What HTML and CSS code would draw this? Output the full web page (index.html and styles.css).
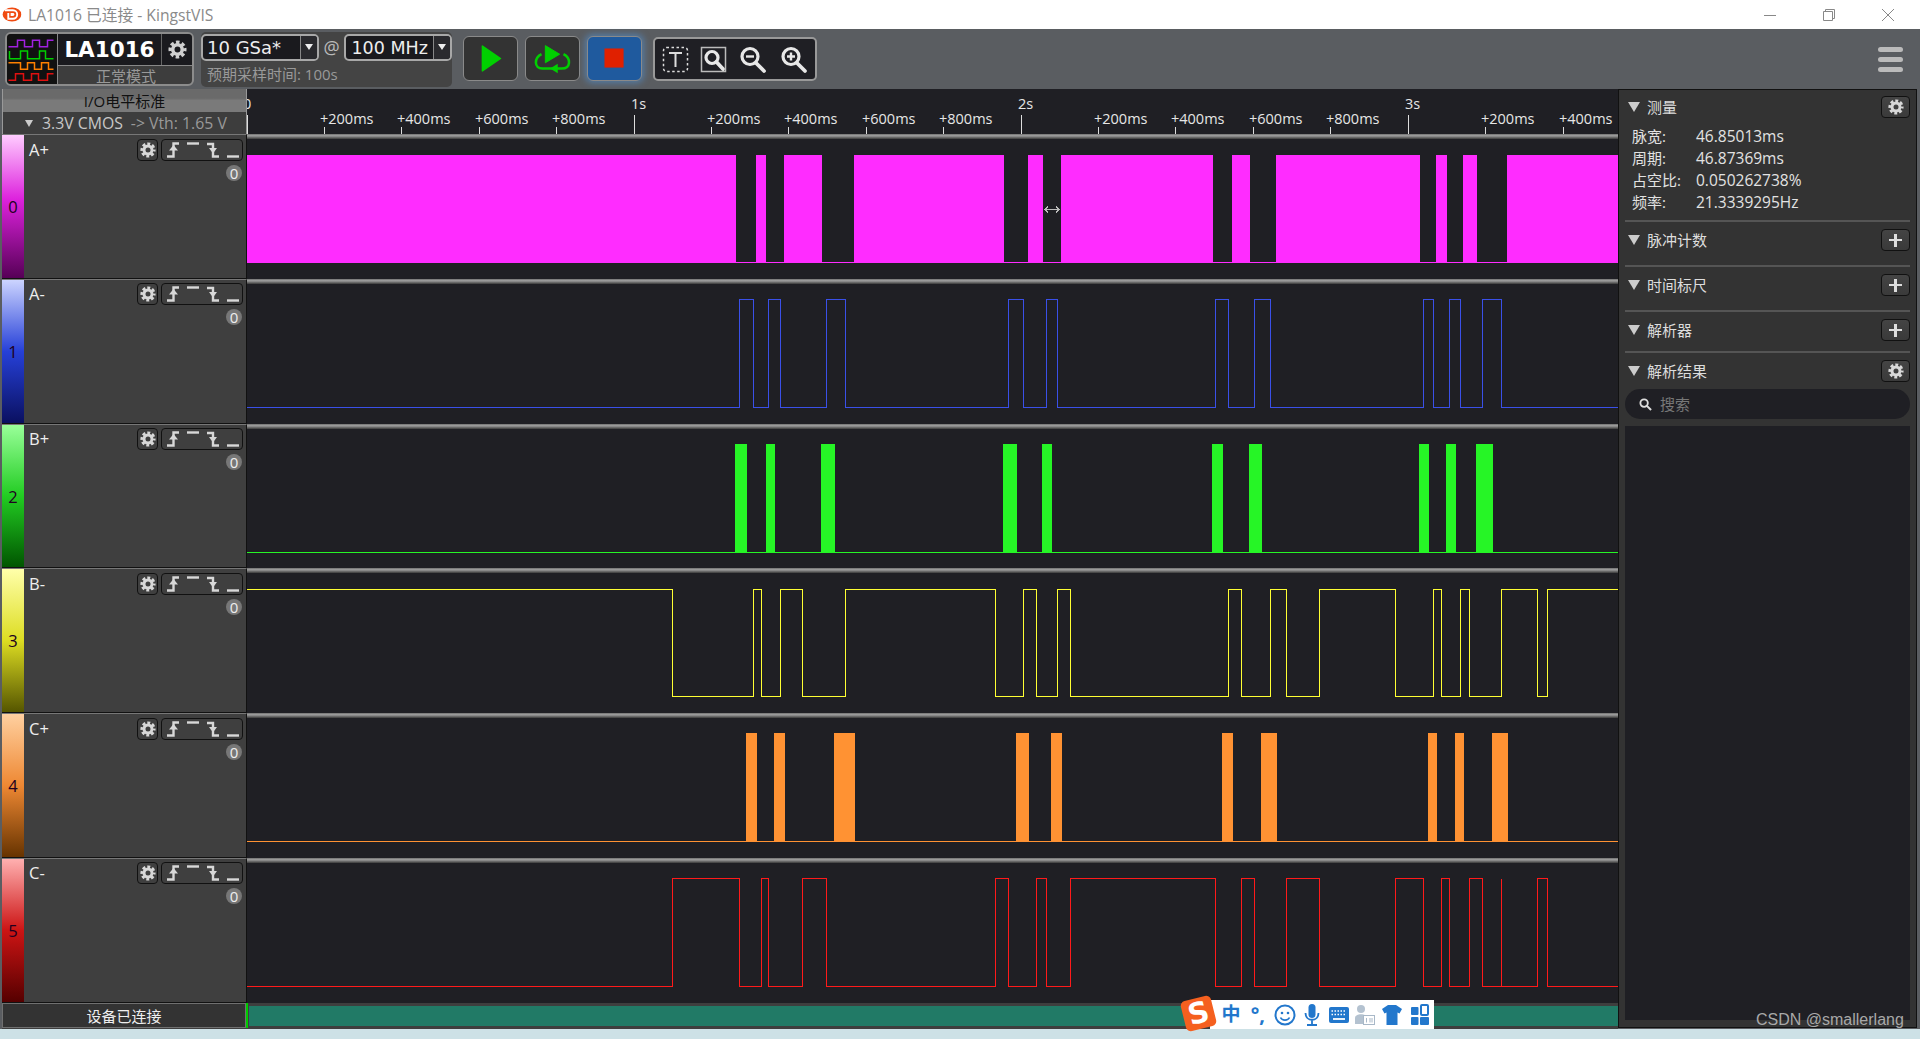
FILE: index.html
```html
<!DOCTYPE html>
<html lang="zh-CN">
<head>
<meta charset="utf-8">
<title>LA1016 已连接 - KingstVIS</title>
<link rel="stylesheet" href="styles.css">
</head>
<body>
<svg class="defs" width="0" height="0">
  <symbol id="gear" viewBox="0 0 16 16">
    <circle cx="8" cy="8" r="4" fill="none" stroke="currentColor" stroke-width="3"/>
    <circle cx="8" cy="8" r="6.200" fill="none" stroke="currentColor" stroke-width="2.800" stroke-dasharray="2.900 1.970" stroke-dashoffset="1.450"/>
  </symbol>
  <symbol id="trig" viewBox="0 0 80 20">
    <path d="M5 16.500H11.500V3.500H17" fill="none" stroke="currentColor" stroke-width="2.400"/>
    <path d="M7 10.500L11.500 5L16 10.500Z" fill="currentColor"/>
    <path d="M25 3.500H37" fill="none" stroke="currentColor" stroke-width="2.400"/>
    <path d="M45 4H51V16.500H57" fill="none" stroke="currentColor" stroke-width="2.400"/>
    <path d="M47 8L51 13.500L55 8Z" fill="currentColor"/>
    <path d="M65 16.500H77" fill="none" stroke="currentColor" stroke-width="2.400"/>
  </symbol>
</svg>

<header class="titlebar">
  <svg class="app-icon" viewBox="0 0 22 16"><ellipse cx="10.500" cy="8" rx="10" ry="7.500" fill="#f04a10"/><path d="M3 3.500H11.500A4.500 4.500 0 0 1 11.500 12.500H6.500V6.500" fill="none" stroke="#fff" stroke-width="2"/><path d="M9 6.500H11.500A1.500 1.500 0 0 1 11.500 9.500H9Z" fill="#fff"/><path d="M20.500 5L22 8L20.500 11Z" fill="#fff"/></svg>
  <span class="title-text">LA1016 已连接 - KingstVIS</span>
  <div class="win-controls">
    <svg class="win-btn" viewBox="0 0 14 14"><path d="M1 7.500H13"/></svg>
    <svg class="win-btn" viewBox="0 0 14 14"><path d="M1.500 3.500H10.500V12.500H1.500ZM3.500 3.500V1.500H12.500V10.500H10.500"/></svg>
    <svg class="win-btn" viewBox="0 0 14 14"><path d="M1 1L13 13M13 1L1 13"/></svg>
  </div>
</header>

<section class="toolbar">
  <div class="device">
    <svg class="device-logo" viewBox="0 0 49 50">
      <path class="lg-purple" d="M1 12.700H10V6.300H17V12.700H25V6.300H32V12.700H40V6.300H46"/>
      <path class="lg-green" d="M2 17V24.700H13V17H20V24.700H32V17H38V24.700H46"/>
      <path class="lg-orange" d="M1 28.700H13V35.300H20V28.700H27V35.300H34V28.700H41V35.300H46"/>
      <path class="lg-red" d="M1 46.300H8V39.700H16V46.300H24V39.700H31V46.300H40V39.700H46"/>
    </svg>
    <div class="device-main">
      <div class="device-top">
        <span class="device-name">LA1016</span>
        <span class="device-gear"><svg class="gear-lg"><use href="#gear"/></svg></span>
      </div>
      <div class="device-mode">正常模式</div>
    </div>
  </div>

  <div class="sampler">
    <div class="sampler-top">
      <div class="combo combo-rate"><span class="combo-value">10 GSa*</span><span class="combo-arrow"><i class="tri-white"></i></span></div>
      <span class="at">@</span>
      <div class="combo combo-thresh"><span class="combo-value">100 MHz</span><span class="combo-arrow"><i class="tri-white"></i></span></div>
    </div>
    <div class="sampler-hint">预期采样时间: 100s</div>
  </div>

  <button class="tool-btn">
    <svg class="tool-ico" viewBox="0 0 55 45"><path d="M19 9.500L38 22.500L19 35.500Z" fill="#00d000" stroke="#00d000" stroke-linejoin="round" stroke-width="1.500"/></svg>
  </button>
  <button class="tool-btn">
    <svg class="tool-ico" viewBox="0 0 55 45"><path d="M20 9L35 18L20 27Z" fill="#00d000" stroke="#00d000" stroke-linejoin="round"/><path d="M16 18C8 22 8 33 17 33H37C47 33 47 22 39 18" fill="none" stroke="#00d000" stroke-width="2.600"/><path d="M33 28V38L25 33Z" fill="#00d000"/></svg>
  </button>
  <button class="tool-btn tool-stop">
    <svg class="tool-ico" viewBox="0 0 55 45"><rect x="17" y="12" width="20" height="20" fill="#e02000"/></svg>
  </button>

  <div class="view-tools">
    <svg class="view-ico" viewBox="0 0 32 40"><rect x="4.500" y="8.500" width="24" height="24" rx="3" fill="none" stroke="#ddd" stroke-width="1.500" stroke-dasharray="2.500 2.500"/><path d="M10 14H23M16.500 14V28" fill="none" stroke="#ddd" stroke-width="2"/></svg>
    <svg class="view-ico" viewBox="0 0 40 40"><rect x="9.500" y="8.500" width="24" height="24" fill="none" stroke="#bbb" stroke-width="1.500"/><circle cx="20" cy="18.500" r="6" fill="none" stroke="#e8e8e8" stroke-width="3.200"/><path d="M24.500 23L31 30" stroke="#e8e8e8" stroke-width="3.800" stroke-linecap="round"/></svg>
    <svg class="view-ico" viewBox="0 0 40 40"><circle cx="17" cy="17.500" r="8" fill="none" stroke="#e8e8e8" stroke-width="3.200"/><path d="M23 24L31 32" stroke="#e8e8e8" stroke-width="3.800" stroke-linecap="round"/><path d="M13 17.500H21" stroke="#e8e8e8" stroke-width="2.400"/></svg>
    <svg class="view-ico" viewBox="0 0 40 40"><circle cx="17" cy="17.500" r="8" fill="none" stroke="#e8e8e8" stroke-width="3.200"/><path d="M23 24L31 32" stroke="#e8e8e8" stroke-width="3.800" stroke-linecap="round"/><path d="M13 17.500H21M17 13.500V21.500" stroke="#e8e8e8" stroke-width="2.400"/></svg>
  </div>

  <div class="hamburger"><i></i><i></i><i></i></div>
</section>

<main class="main">
  <div class="workspace">
    <div class="top-row">
      <div class="io">
        <div class="io-title">I/O电平标准</div>
        <div class="io-value"><i class="tri-gray"></i><span class="io-std">3.3V CMOS</span><span class="io-vth">-&gt; Vth: 1.65 V</span></div>
      </div>
      <svg class="ruler" viewBox="247 89 1371 45">
        <path class="tick" d="M247.500 115V134M324.500 127V134M401.500 127V134M479.500 127V134M556.500 127V134M634.500 115V134M711.500 127V134M788.500 127V134M866.500 127V134M943.500 127V134M1021.500 115V134M1098.500 127V134M1175.500 127V134M1253.500 127V134M1330.500 127V134M1408.500 115V134M1485.500 127V134M1563.500 127V134"/>
        <text class="tk" x="243" y="109">0</text>
        <text class="tk" x="320" y="124">+200ms</text>
        <text class="tk" x="397" y="124">+400ms</text>
        <text class="tk" x="475" y="124">+600ms</text>
        <text class="tk" x="552" y="124">+800ms</text>
        <text class="tk" x="631" y="109">1s</text>
        <text class="tk" x="707" y="124">+200ms</text>
        <text class="tk" x="784" y="124">+400ms</text>
        <text class="tk" x="862" y="124">+600ms</text>
        <text class="tk" x="939" y="124">+800ms</text>
        <text class="tk" x="1018" y="109">2s</text>
        <text class="tk" x="1094" y="124">+200ms</text>
        <text class="tk" x="1171" y="124">+400ms</text>
        <text class="tk" x="1249" y="124">+600ms</text>
        <text class="tk" x="1326" y="124">+800ms</text>
        <text class="tk" x="1405" y="109">3s</text>
        <text class="tk" x="1481" y="124">+200ms</text>
        <text class="tk" x="1559" y="124">+400ms</text>
      </svg>
    </div>

    <div class="row">
      <div class="head">
        <div class="strip strip-0"><span class="strip-num">0</span></div>
        <div class="head-body">
          <div class="head-top"><span class="ch-name">A+</span><span class="mini-btn"><svg class="gear-sm"><use href="#gear"/></svg></span><span class="trig-btn"><svg class="trig-ico"><use href="#trig"/></svg></span></div>
          <div class="badge">0</div>
        </div>
      </div>
      <div class="wave">
        <div class="sep"></div>
        <svg class="wave-svg" viewBox="247 139 1371 140">
          <rect class="f-mag" x="247" y="155" width="1371" height="108"/>
          <path class="gap" d="M736 155H756V262H736ZM766 155H784V262H766ZM822 155H854V262H822ZM1004 155H1028V262H1004ZM1043 155H1061V262H1043ZM1213 155H1232V262H1213ZM1250 155H1276V262H1250ZM1420 155H1436V262H1420ZM1447 155H1463V262H1447ZM1477 155H1507V262H1477Z"/>
          <path class="cursor" d="M1045 209.500H1059M1048 206.500L1045 209.500L1048 212.500M1056 206.500L1059 209.500L1056 212.500"/>
        </svg>
      </div>
    </div>

    <div class="row row-up">
      <div class="head">
        <div class="strip strip-1"><span class="strip-num">1</span></div>
        <div class="head-body">
          <div class="head-top"><span class="ch-name">A-</span><span class="mini-btn"><svg class="gear-sm"><use href="#gear"/></svg></span><span class="trig-btn"><svg class="trig-ico"><use href="#trig"/></svg></span></div>
          <div class="badge">0</div>
        </div>
      </div>
      <div class="wave">
        <div class="sep"></div>
        <svg class="wave-svg" viewBox="247 284 1371 140">
          <path class="l-blue" d="M247 407.500H739.500V299.500H753.500V407.500H768.500V299.500H780.500V407.500H826.500V299.500H845.500V407.500H1008.500V299.500H1023.500V407.500H1046.500V299.500H1057.500V407.500H1215.500V299.500H1228.500V407.500H1254.500V299.500H1270.500V407.500H1423.500V299.500H1433.500V407.500H1449.500V299.500H1460.500V407.500H1482.500V299.500H1501.500V407.500H1618"/>
        </svg>
      </div>
    </div>

    <div class="row row-short row-up">
      <div class="head">
        <div class="strip strip-2"><span class="strip-num">2</span></div>
        <div class="head-body">
          <div class="head-top"><span class="ch-name">B+</span><span class="mini-btn"><svg class="gear-sm"><use href="#gear"/></svg></span><span class="trig-btn"><svg class="trig-ico"><use href="#trig"/></svg></span></div>
          <div class="badge">0</div>
        </div>
      </div>
      <div class="wave">
        <div class="sep"></div>
        <svg class="wave-svg" viewBox="247 429 1371 139">
          <path class="f-green" d="M247 552H1618V553H247ZM735 444H747V553H735ZM766 444H775V553H766ZM821 444H835V553H821ZM1003 444H1017V553H1003ZM1042 444H1052V553H1042ZM1212 444H1223V553H1212ZM1249 444H1262V553H1249ZM1419 444H1429V553H1419ZM1446 444H1456V553H1446ZM1476 444H1493V553H1476Z"/>
        </svg>
      </div>
    </div>

    <div class="row">
      <div class="head">
        <div class="strip strip-3"><span class="strip-num">3</span></div>
        <div class="head-body">
          <div class="head-top"><span class="ch-name">B-</span><span class="mini-btn"><svg class="gear-sm"><use href="#gear"/></svg></span><span class="trig-btn"><svg class="trig-ico"><use href="#trig"/></svg></span></div>
          <div class="badge">0</div>
        </div>
      </div>
      <div class="wave">
        <div class="sep"></div>
        <svg class="wave-svg" viewBox="247 573 1371 140">
          <path class="l-yellow" d="M247 589.500H672.500V696.500H753.500V589.500H761.500V696.500H780.500V589.500H802.500V696.500H845.500V589.500H995.500V696.500H1023.500V589.500H1036.500V696.500H1057.500V589.500H1070.500V696.500H1228.500V589.500H1241.500V696.500H1270.500V589.500H1286.500V696.500H1319.500V589.500H1395.500V696.500H1433.500V589.500H1441.500V696.500H1460.500V589.500H1469.500V696.500H1501.500V589.500H1537.500V696.500H1547.500V589.500H1618"/>
        </svg>
      </div>
    </div>

    <div class="row">
      <div class="head">
        <div class="strip strip-4"><span class="strip-num">4</span></div>
        <div class="head-body">
          <div class="head-top"><span class="ch-name">C+</span><span class="mini-btn"><svg class="gear-sm"><use href="#gear"/></svg></span><span class="trig-btn"><svg class="trig-ico"><use href="#trig"/></svg></span></div>
          <div class="badge">0</div>
        </div>
      </div>
      <div class="wave">
        <div class="sep"></div>
        <svg class="wave-svg" viewBox="247 718 1371 140">
          <path class="f-orange" d="M247 841H1618V842H247ZM746 733H757V842H746ZM774 733H785V842H774ZM834 733H855V842H834ZM1016 733H1029V842H1016ZM1051 733H1062V842H1051ZM1222 733H1233V842H1222ZM1261 733H1277V842H1261ZM1428 733H1437V842H1428ZM1455 733H1464V842H1455ZM1492 733H1508V842H1492Z"/>
        </svg>
      </div>
    </div>

    <div class="row row-up">
      <div class="head">
        <div class="strip strip-5"><span class="strip-num">5</span></div>
        <div class="head-body">
          <div class="head-top"><span class="ch-name">C-</span><span class="mini-btn"><svg class="gear-sm"><use href="#gear"/></svg></span><span class="trig-btn"><svg class="trig-ico"><use href="#trig"/></svg></span></div>
          <div class="badge">0</div>
        </div>
      </div>
      <div class="wave">
        <div class="sep"></div>
        <svg class="wave-svg" viewBox="247 863 1371 140">
          <path class="l-red" d="M247 986.500H672.500V878.500H739.500V986.500H761.500V878.500H768.500V986.500H802.500V878.500H826.500V986.500H995.500V878.500H1008.500V986.500H1036.500V878.500H1046.500V986.500H1070.500V878.500H1215.500V986.500H1241.500V878.500H1254.500V986.500H1286.500V878.500H1319.500V986.500H1395.500V878.500H1423.500V986.500H1441.500V878.500H1449.500V986.500H1469.500V878.500H1482.500V986.500H1501.500V878.500V986.500H1537.500V878.500H1547.500V986.500H1618"/>
        </svg>
      </div>
    </div>

    <div class="status">
      <div class="status-label">设备已连接</div>
      <div class="status-track"><div class="status-fill"></div></div>
    </div>
  </div>

  <aside class="panel">
    <section class="sec sec-first">
      <div class="sec-head"><i class="tri-light"></i><span class="sec-title">测量</span><span class="sq-btn"><svg class="gear-sm"><use href="#gear"/></svg></span></div>
      <dl class="metrics">
        <div class="metric"><dt>脉宽:</dt><dd>46.85013ms</dd></div>
        <div class="metric"><dt>周期:</dt><dd>46.87369ms</dd></div>
        <div class="metric"><dt>占空比:</dt><dd>0.050262738%</dd></div>
        <div class="metric"><dt>频率:</dt><dd>21.3339295Hz</dd></div>
      </dl>
    </section>
    <section class="sec">
      <div class="sec-head"><i class="tri-light"></i><span class="sec-title">脉冲计数</span><span class="sq-btn plus"></span></div>
    </section>
    <section class="sec">
      <div class="sec-head"><i class="tri-light"></i><span class="sec-title">时间标尺</span><span class="sq-btn plus"></span></div>
    </section>
    <section class="sec sec-tight">
      <div class="sec-head"><i class="tri-light"></i><span class="sec-title">解析器</span><span class="sq-btn plus"></span></div>
    </section>
    <section class="sec-last">
      <div class="sec-head"><i class="tri-light"></i><span class="sec-title">解析结果</span><span class="sq-btn"><svg class="gear-sm"><use href="#gear"/></svg></span></div>
      <div class="search">
        <svg class="search-ico" viewBox="0 0 14 14"><circle cx="5.500" cy="5.500" r="4" fill="none" stroke="#ddd" stroke-width="2"/><path d="M8.500 8.500L13 13" stroke="#ddd" stroke-width="2.200"/></svg>
        <span class="search-text">搜索</span>
      </div>
      <div class="results"></div>
    </section>
  </aside>
</main>

<div class="ime">
  <span class="ime-zh">中</span>
  <span class="ime-punc">°,</span>
  <svg class="ime-ico" viewBox="0 0 22 22"><circle cx="11" cy="11" r="9.500" fill="none" stroke="#2277cc" stroke-width="2"/><circle cx="8" cy="9" r="1.300" fill="#2277cc"/><circle cx="14" cy="9" r="1.300" fill="#2277cc"/><path d="M6.500 13.500C8 17 14 17 15.500 13.500" fill="none" stroke="#2277cc" stroke-width="1.600"/></svg>
  <svg class="ime-ico" viewBox="0 0 22 22"><rect x="7.500" y="0" width="7" height="14" rx="3.500" fill="#2277cc"/><path d="M4.500 9C4.500 18 17.500 18 17.500 9M11 16V20M6 21H16" fill="none" stroke="#2277cc" stroke-width="1.800"/></svg>
  <svg class="ime-ico" viewBox="0 0 22 22"><rect x="1" y="3" width="20" height="16" rx="2" fill="#2277cc"/><path d="M3.500 7H18.500M3.500 10.500H18.500" stroke="#fff" stroke-width="1.500" stroke-dasharray="1.500 1.500"/><path d="M5 15H17" stroke="#fff" stroke-width="1.800"/></svg>
  <svg class="ime-ico" viewBox="0 0 22 22"><circle cx="7" cy="5" r="4" fill="#b4c2d0"/><path d="M1 20V14C1 9 13 9 13 14V20Z" fill="#b4c2d0"/><rect x="9.500" y="11.500" width="11" height="9" fill="#fff" stroke="#a8b8c8"/><path d="M12.500 14V18.500M16 14V18.500M18 14V18.500" stroke="#a8b8c8"/></svg>
  <svg class="ime-ico" viewBox="0 0 22 22"><path d="M7 1H15L21 5L18.500 9.500L16.500 8.500V21H5.500V8.500L3.500 9.500L1 5Z" fill="#2277cc"/></svg>
  <svg class="ime-ico" viewBox="0 0 22 22"><rect x="3" y="3" width="7.500" height="8" rx="1" fill="#2277cc"/><rect x="13" y="1" width="7" height="10" rx="1" fill="#fff" stroke="#2277cc" stroke-width="2"/><rect x="3" y="13" width="7.500" height="8" rx="1" fill="#2277cc"/><rect x="12" y="13" width="9" height="8" rx="1" fill="#2277cc"/></svg>
</div>
<div class="ime-logo"><span class="ime-s">S</span></div>
<div class="watermark">CSDN @smallerlang</div>
<div class="clock-tip"><span>21:00</span></div>
</body>
</html>
```
FILE: styles.css
```css
* { box-sizing: border-box; }
html, body { margin: 0; padding: 0; }
body {
  width: 1920px;
  height: 1039px;
  overflow: hidden;
  position: relative;
  display: flex;
  flex-direction: column;
  background: #cde1e6;
  font-family: "Open Sans", "Noto Sans CJK SC", sans-serif;
  font-size: 15px;
  color: #ddd;
}
.defs { position: absolute; }

/* title bar */
.titlebar { height: 29px; background: #fff; display: flex; align-items: center; padding-left: 2px; flex: none; }
.app-icon { width: 21px; height: 15px; margin-right: 5px; }
.title-text { color: #8a8a8a; font-size: 15.700px; }
.win-controls { margin-left: auto; display: flex; gap: 45px; padding-right: 25px; }
.win-btn { width: 14px; height: 14px; fill: none; stroke: #888; stroke-width: 1; }

/* toolbar */
.toolbar { height: 60px; flex: none; background: #5a5d61; display: flex; align-items: center; padding-left: 5px; }
.device { width: 189px; height: 54px; display: flex; background: #3d3d3d; border: 2px solid #8c8c8c; border-radius: 6px; overflow: hidden; }
.device-logo { width: 50px; height: 50px; background: #111; flex: none; fill: none; stroke-width: 1.500; }
.lg-purple { stroke: #a020e0; }
.lg-green { stroke: #00d000; }
.lg-orange { stroke: #ff8000; }
.lg-red { stroke: #e01010; }
.device-main { flex: 1; display: flex; flex-direction: column; }
.device-top { height: 32px; display: flex; background: #1a1a1e; border-bottom: 1px solid #888; border-left: 1px solid #888; }
.device-name { flex: 1; font-family: "DejaVu Sans", sans-serif; font-weight: 700; font-size: 21.500px; color: #fff; text-align: center; line-height: 32px; }
.device-gear { width: 31px; border-left: 1px solid #666; display: flex; align-items: center; justify-content: center; color: #d0d0d0; }
.gear-lg { width: 19px; height: 19px; }
.device-mode { flex: 1; text-align: center; color: #999; font-size: 15px; line-height: 20px; padding-left: 2px; border-left: 1px solid #888; }

.sampler { width: 251px; height: 55px; margin-left: 7px; background: #444; border-radius: 5px; padding: 2px 0 0; }
.sampler-top { display: flex; align-items: center; height: 27px; }
.combo { height: 27px; display: flex; background: #1a1a1e; border: 2px solid #a8a8a8; border-radius: 5px; overflow: hidden; }
.combo-rate { width: 118px; }
.combo-thresh { width: 108px; }
.combo-value { flex: 1; font-family: "DejaVu Sans", sans-serif; font-size: 18px; line-height: 24px; color: #eee; padding-left: 4px; }
.combo-thresh .combo-value { font-size: 17.500px; padding-left: 5px; }
.combo-arrow { width: 17px; border-left: 1px solid #888; background: #2a2a2e; display: flex; align-items: center; justify-content: center; }
.tri-white { width: 0; height: 0; border-left: 4.500px solid transparent; border-right: 4.500px solid transparent; border-top: 6px solid #eee; }
.at { width: 26px; text-align: center; font-size: 18px; color: #bbb; }
.sampler-hint { color: #999; font-size: 15px; line-height: 20px; padding: 3px 0 0 6px; }

.tool-btn { width: 55px; height: 45px; padding: 0; margin: 0 0 1px 7px; background: #333; border: 1px solid #8a8a8a; border-radius: 6px; display: block; }
.toolbar .sampler + .tool-btn { margin-left: 11px; }
.tool-ico { width: 53px; height: 43px; display: block; }
.tool-stop { background: #1f5a9e; box-shadow: 0 0 6px 2px rgba(80, 150, 220, .55); }

.view-tools { width: 164px; height: 44px; margin-left: 11px; display: flex; align-items: center; padding-left: 4px; background: #1f1f24; border: 2px solid #999; border-radius: 5px; }
.view-ico { height: 40px; width: 40px; }
.view-ico:first-child { width: 32px; }
.view-ico + .view-ico { margin-left: 1px; }

.hamburger { margin-left: auto; margin-right: 17px; width: 25px; display: flex; flex-direction: column; gap: 5px; }
.hamburger i { display: block; height: 5px; border-radius: 3px; background: #bbb; }

/* main */
.main { height: 940px; flex: none; display: flex; background: #5a5d61; }
.workspace { width: 1618px; padding-left: 2px; display: flex; flex-direction: column; background: #5a5d61; }
.top-row { height: 45px; display: flex; }
.io { width: 245px; border: 1px solid #999; border-bottom: 0; border-top: 0; background: #3d3d3d; }
.io-title { height: 23px; background: linear-gradient(#6a6a6a, #6a6a6a 40%, #7a7a7a 50%, #7a7a7a); color: #111; text-align: center; line-height: 25px; font-size: 15px; }
.io-value { height: 22px; display: flex; align-items: center; font-size: 15.800px; padding-left: 22px; }
.tri-gray { width: 0; height: 0; margin-right: 9px; border-left: 4.500px solid transparent; border-right: 4.500px solid transparent; border-top: 7px solid #ccc; }
.io-std { color: #c8c8c8; }
.io-vth { color: #999; margin-left: 8px; }
.ruler { width: 1371px; height: 45px; display: block; background: #1f1f24; }
.tick { stroke: #ddd; stroke-width: 1; fill: none; }
.tk { fill: #e6e6e6; font-size: 14.500px; font-family: "Open Sans", sans-serif; }

.row { height: 145px; display: flex; }
.row-short { height: 144px; }
.head { width: 245px; display: flex; background: #3f3f3f; border-top: 1px solid #777; border-bottom: 1px solid #111; border-right: 1px solid #111; }
.strip { width: 22px; display: flex; align-items: center; justify-content: center; }
.strip-num { font-size: 16.500px; color: #200020; }
.strip-0 { background: linear-gradient(#ffccff, #dd22dd 45%, #560056); }
.strip-1 { background: linear-gradient(#ccd4ff, #2640d8 50%, #0a1060); }
.strip-2 { background: linear-gradient(#99ff99, #22cc22 50%, #005500); }
.strip-3 { background: linear-gradient(#ffffaa, #dddd22 50%, #555500); }
.strip-4 { background: linear-gradient(#ffd0a0, #ee8833 50%, #663300); }
.strip-5 { background: linear-gradient(#ffb0b0, #cc1414 50%, #550000); }
.head-body { flex: 1; padding: 4px 3px 0 5px; }
.row-up .head-body { padding-top: 3px; }
.head-top { display: flex; align-items: center; }
.ch-name { width: 108px; font-size: 16.500px; color: #eee; line-height: 22px; }
.mini-btn { width: 21px; height: 22px; border: 1px solid #111; border-radius: 4px; display: flex; align-items: center; justify-content: center; color: #d8d8d8; }
.gear-sm { width: 16px; height: 16px; }
.trig-btn { width: 82px; height: 22px; margin-left: 3px; border: 1px solid #111; border-radius: 4px; color: #d8d8d8; display: block; }
.trig-ico { width: 80px; height: 20px; display: block; }
.badge { width: 16px; height: 16px; margin: 4px 1px 0 auto; border-radius: 50%; background: #777; color: #eee; text-align: center; font-size: 15px; line-height: 16px; }
.wave { width: 1371px; display: flex; flex-direction: column; margin-left: 0; background: #1f1f24; }
.sep { height: 5px; flex: none; background: linear-gradient(#707070, #a0a0a0 35%, #707070 65%, #3a3a3a); }
.wave-svg { display: block; width: 1371px; flex: 1; shape-rendering: crispEdges; }
.f-mag { fill: #ff2cff; }
.gap { fill: #1f1f24; }
.cursor { fill: none; stroke: #bbb; stroke-width: 1; }
.f-green { fill: #26f526; }
.f-orange { fill: #ff9233; }
.l-blue, .l-yellow, .l-red { fill: none; stroke-width: 1; }
.l-blue { stroke: #3a50e8; }
.l-yellow { stroke: #ffff33; }
.l-red { stroke: #ff1a1a; }

.status { height: 26px; display: flex; background: #3e3e3e; }
.status-label { width: 244px; height: 25px; border: 1px solid #707070; background: #333; color: #eee; text-align: center; line-height: 24px; font-size: 15px; }
.status-track { flex: 1; border-left: 2px solid #00cc00; height: 25px; padding: 3px 0 2px 1px; }
.status-fill { height: 100%; background: #217a66; }

/* right panel */
.panel { width: 299px; height: 939px; background: #333; border: 1px solid #111; padding: 0 6px; display: flex; flex-direction: column; }
.sec { border-bottom: 2px solid #555; padding: 6px 0 13px; }
.sec-first { padding: 5px 0 7px; }
.sec-tight { padding-bottom: 9px; }
.sec-last { padding-top: 6px; flex: 1; display: flex; flex-direction: column; padding-bottom: 7px; }
.sec-head { height: 24px; display: flex; align-items: center; padding-left: 3px; }
.tri-light { width: 0; height: 0; border-left: 6px solid transparent; border-right: 6px solid transparent; border-top: 10px solid #ccc; }
.sec-title { margin-left: 7px; margin-bottom: 2px; font-size: 15px; color: #ddd; }
.sq-btn { margin-left: auto; width: 29px; height: 22px; border: 1px solid #111; border-radius: 4px; background: linear-gradient(#444, #3a3a3a); display: flex; align-items: center; justify-content: center; color: #d8d8d8; position: relative; }
.plus::before { content: ""; width: 13px; height: 2.500px; background: #ddd; }
.plus::after { content: ""; position: absolute; width: 2.500px; height: 13px; background: #ddd; }
.metrics { margin: 6px 0 0; }
.metric { height: 22px; display: flex; align-items: center; font-size: 15.500px; color: #e2e2e2; margin-top: 0; }
.metric dt { width: 71px; padding-left: 7px; font-size: 15px; margin-bottom: 1px; }
.metric dd { margin: 0 0 1px; }
.search { height: 30px; margin-top: 6px; background: #1f1f24; border-radius: 15px; display: flex; align-items: center; padding-left: 14px; flex: none; }
.search-ico { width: 13px; height: 13px; }
.search-text { margin: 0 0 2px 8px; color: #777; font-size: 15px; }
.results { flex: 1; margin-top: 7px; background: #1f1f24; }

/* overlays */
.ime { position: absolute; left: 1210px; top: 1000px; width: 224px; height: 29px; background: #fff; display: flex; align-items: center; padding-left: 10px; color: #2277cc; }
.ime-zh, .ime-punc, .ime-ico { width: 22px; margin-right: 4.900px; flex: none; }
.ime-zh { font-size: 19px; font-weight: 700; text-align: center; line-height: 29px; }
.ime-punc { font-size: 20px; font-weight: 700; text-align: center; line-height: 24px; }
.ime-ico { height: 22px; }
.ime-logo { position: absolute; left: 1183px; top: 998px; width: 31px; height: 31px; background: #f5601f; border-radius: 5px; transform: rotate(-14deg); display: flex; align-items: center; justify-content: center; }
.ime-s { color: #fff; font-family: "DejaVu Sans", sans-serif; font-weight: 700; font-size: 29px; line-height: 31px; }
.watermark { position: absolute; left: 1756px; top: 1010px; font-family: "Liberation Sans", sans-serif; font-size: 16px; line-height: 20px; color: #a8a8a8; }
.clock-tip { position: absolute; left: 1787px; top: 1037px; height: 2px; overflow: hidden; color: #111; font-size: 15px; }
.clock-tip span { display: block; margin-top: -4px; }
```
